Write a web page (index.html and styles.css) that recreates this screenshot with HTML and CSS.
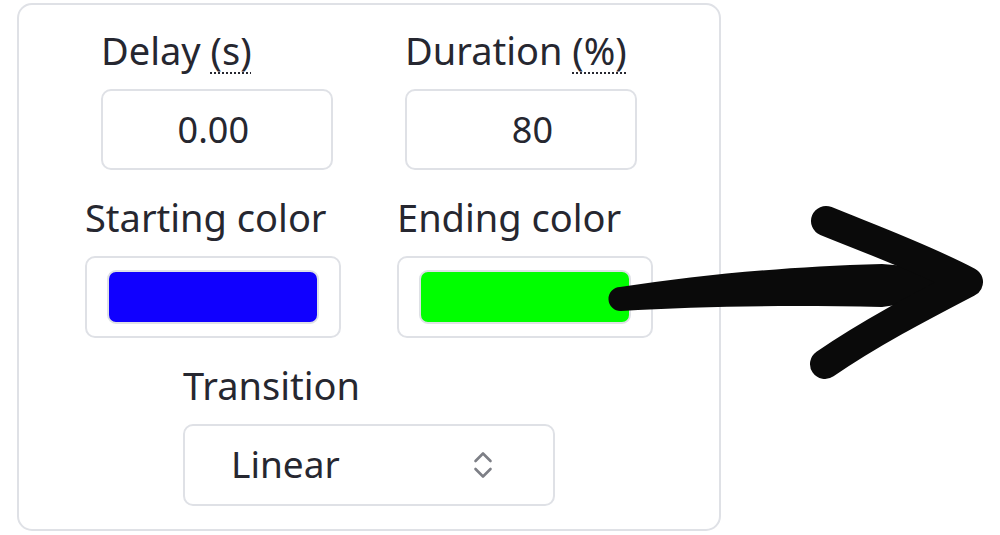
FILE: index.html
```html
<!DOCTYPE html>
<html lang="en">
<head>
<meta charset="utf-8">
<title>Transition settings</title>
<link rel="stylesheet" href="styles.css">
</head>
<body>
<div class="page">
  <section class="card">
    <div class="row row-top">
      <div class="field field-num">
        <label class="label">Delay <abbr title="seconds">(s)</abbr></label>
        <input class="num-input" type="text" value="0.00">
      </div>
      <div class="field field-num">
        <label class="label">Duration <abbr title="percent">(%)</abbr></label>
        <input class="num-input" type="text" value="80">
      </div>
    </div>
    <div class="row row-mid">
      <div class="field field-color">
        <label class="label">Starting color</label>
        <div class="color-box"><div class="swatch swatch-blue"></div></div>
      </div>
      <div class="field field-color">
        <label class="label">Ending color</label>
        <div class="color-box"><div class="swatch swatch-green"></div></div>
      </div>
    </div>
    <div class="row">
      <div class="field field-select">
        <label class="label">Transition</label>
        <div class="select">
          <span class="select-value">Linear</span>
          <svg class="chevrons" width="20" height="30" viewBox="0 0 20 30" aria-hidden="true">
            <path d="M2.5 11 L10 3.5 L17.5 11" fill="none" stroke="#7d7f86" stroke-width="2.6" stroke-linecap="round" stroke-linejoin="round"/>
            <path d="M2.5 19 L10 26.5 L17.5 19" fill="none" stroke="#7d7f86" stroke-width="2.6" stroke-linecap="round" stroke-linejoin="round"/>
          </svg>
        </div>
      </div>
    </div>
  </section>
  <svg class="arrow" width="1000" height="535" viewBox="0 0 1000 535" aria-hidden="true">
    <path d="M620 284 C700 272 780 264 882 261 L966 268 L966 292 L882 304 C790 302 700 303 621 308 A12 12 0 0 1 620 284 Z" fill="#0a0a0a"/>
    <path d="M826 218 C870 236 920 254 968 279 C920 304 870 330 825 361" fill="none" stroke="#0a0a0a" stroke-width="30" stroke-linecap="round" stroke-linejoin="round"/>
  </svg>
</div>
</body>
</html>
```

FILE: styles.css
```css
html, body {
  margin: 0;
  padding: 0;
  background: #ffffff;
  overflow: hidden;
}

body {
  font-family: "Noto Sans", "Open Sans", sans-serif;
  color: #262730;
}

.page {
  position: relative;
  width: 1000px;
  height: 535px;
}

.card {
  box-sizing: border-box;
  margin: 3px 0 0 17px;
  width: 704px;
  height: 528px;
  border: 2px solid #dfe1e6;
  border-radius: 15px;
  padding: 22px 0 23px;
  display: flex;
  flex-direction: column;
  align-items: center;
  gap: 24px;
}

.row {
  display: flex;
  justify-content: center;
}

.row-top {
  gap: 72px;
}

.row-mid {
  gap: 56px;
}

.field {
  display: flex;
  flex-direction: column;
  gap: 16px;
}

.field-num {
  width: 232px;
}

.field-color {
  width: 256px;
}

.field-select {
  width: 372px;
}

.label {
  font-size: 38px;
  line-height: 46px;
  height: 46px;
  white-space: nowrap;
  color: #262730;
}

.label abbr {
  text-decoration: underline dotted;
  text-decoration-thickness: 2px;
  text-underline-offset: 7px;
}

.num-input {
  box-sizing: border-box;
  width: 100%;
  height: 81px;
  margin: 0;
  border: 2px solid #dfe1e6;
  border-radius: 10px;
  padding: 0 82px 0 10px;
  font-family: inherit;
  font-size: 36px;
  color: #262730;
  text-align: right;
  background: #ffffff;
  outline: none;
}

.color-box {
  box-sizing: border-box;
  height: 82px;
  border: 2px solid #dfe1e6;
  border-radius: 10px;
  padding: 12px 20px;
  display: flex;
}

.swatch {
  flex: 1;
  border: 2px solid #dfe1e6;
  border-radius: 9px;
}

.swatch-blue {
  background: #1000ff;
}

.swatch-green {
  background: #00ff00;
}

.select {
  box-sizing: border-box;
  height: 82px;
  border: 2px solid #dfe1e6;
  border-radius: 10px;
  padding: 0 0 0 46px;
  display: flex;
  align-items: center;
}

.select-value {
  font-size: 37px;
  color: #262730;
  width: 242px;
  margin-top: -3px;
}

.chevrons {
  display: block;
}

.arrow {
  position: absolute;
  left: 0;
  top: 0;
  pointer-events: none;
}
```
